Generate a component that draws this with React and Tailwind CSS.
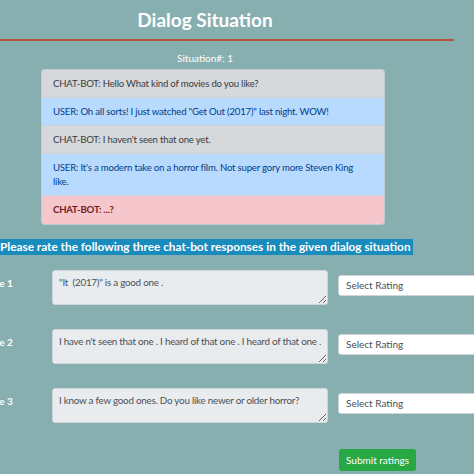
import React from 'react';

const messages = [
  { who: 'bot', text: 'CHAT-BOT: Hello What kind of movies do you like?' },
  { who: 'user', text: 'USER: Oh all sorts! I just watched "Get Out (2017)" last night. WOW!' },
  { who: 'bot', text: "CHAT-BOT: I haven't seen that one yet." },
  { who: 'user', text: "USER: It's a modern take on a horror film. Not super gory more Steven King like." },
  { who: 'next', text: 'CHAT-BOT: ...?' },
];

const responses = [
  '"It  (2017)" is a good one .',
  "I have n't seen that one . I heard of that one . I heard of that one .",
  'I know a few good ones. Do you like newer or older horror?',
];

const rowStyle = {
  bot: 'bg-[#d6d8db] text-[#383d41]',
  user: 'bg-[#b8daff] text-[#004085]',
  next: 'bg-[#f5c6cb] text-[#721c24] font-bold',
};

export default function App() {
  return (
    <div
      className="w-[474px] h-[474px] overflow-hidden bg-[#87afb0] text-white"
      style={{ fontFamily: 'Lato, "Open Sans", sans-serif' }}
    >
      {/* Header */}
      <div className="w-[410px] pt-[7px] text-center">
        <h1 className="text-[19px] font-bold leading-[26px]">Dialog Situation</h1>
      </div>
      <div className="mt-[6px] w-[454px] h-[2px] bg-[#b5553f]" />
      <div className="w-[410px] mt-[10px] text-center text-[10px] leading-[14px]">Situation#: 1</div>

      {/* Dialog */}
      <div className="ml-[41px] mt-[4px] w-[344px] rounded-[3px] overflow-hidden border border-[#c4c9cc]">
        {messages.map((m, i) => (
          <div
            key={i}
            className={`pl-[11px] pr-[14px] pt-[7px] pb-[6px] text-[9.6px] tracking-[-0.2px] leading-[14px] border-b border-[#c9d3da] last:border-b-0 last:pb-[7px] ${rowStyle[m.who]}`}
          >
            {m.text}
          </div>
        ))}
      </div>

      {/* Rating heading */}
      <div className="mt-[14px] -ml-[2px] flex">
        <span className="bg-[#1a8bbd] px-[2px] text-[11.8px] font-bold leading-[16px] whitespace-nowrap">
          Please rate the following three chat-bot responses in the given dialog situation
        </span>
      </div>

      {/* Responses */}
      <div className="mt-[15px] flex flex-col gap-[24px]">
        {responses.map((r, i) => (
          <div key={i} className="flex items-start">
            <div className="shrink-0 -ml-[38px] w-[90px] pt-[6px] text-[10px] font-bold leading-[14px] whitespace-nowrap">
              Response {i + 1}
            </div>
            <textarea
              readOnly
              value={r}
              className="shrink-0 w-[276px] h-[35px] resize-y overflow-hidden rounded-[3px] border border-[#ced4da] bg-[#e9ecef] px-[6px] pt-[4px] text-[9.85px] tracking-[-0.25px] leading-[14px] text-[#495057] outline-none"
              style={{ fontFamily: 'inherit' }}
            />
            <div className="shrink-0 ml-[10px] mt-[5px] w-[150px] h-[21px] rounded-l-[3px] bg-white border border-[#ced4da] px-[7px] flex items-center text-[10px] text-[#495057]">
              Select Rating
            </div>
          </div>
        ))}
      </div>

      <div className="mt-[23px] ml-[339px]">
        <button className="rounded-[3px] bg-[#28a745] px-[7px] h-[22px] text-[10px] text-white leading-[22px]">
          Submit ratings
        </button>
      </div>
    </div>
  );
}
